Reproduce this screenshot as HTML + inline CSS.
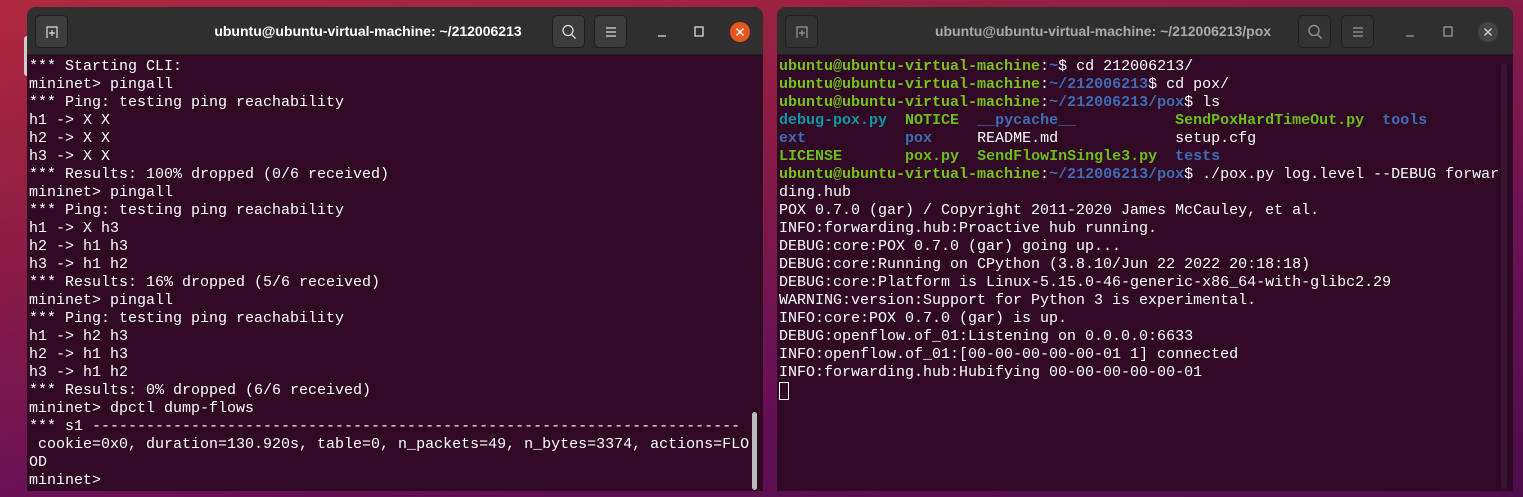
<!DOCTYPE html>
<html><head><meta charset="utf-8"><style>
*{margin:0;padding:0;box-sizing:border-box}
body{width:1523px;height:497px;overflow:hidden;position:relative;
background:linear-gradient(170deg,#b0283f 0%,#8a1c45 35%,#6a1255 65%,#4c0d4a 100%);
font-family:"Liberation Mono",monospace}
.win{position:absolute;top:7px;height:484px;background:#300a24;border-radius:9px 9px 0 0;overflow:hidden}
.tb{height:48px;background:#2f2f2f;position:relative;border-bottom:1px solid #222}
.btn{position:absolute;top:8px;width:33px;height:33px;border-radius:5px;background:#3c3c3c;border:1px solid #1f1f1f}
.title{position:absolute;top:0;height:48px;line-height:48px;font-family:"Liberation Sans",sans-serif;font-weight:bold;font-size:14px;text-align:center;white-space:nowrap}
.term{position:absolute;top:51px;left:1px;font-size:15px;line-height:18px;color:#fff;white-space:pre}
.g{color:#76c31b;font-weight:bold}.b{color:#3f6cb7;font-weight:bold}.c{color:#0c9aa6;font-weight:bold}.gg{color:#6cbf1b;font-weight:bold}
svg{position:absolute}
</style></head><body>
<div style="position:absolute;left:24px;top:36px;width:6px;height:40px;background:#ccc;border-radius:3px"></div>
<div class="win" style="left:27px;width:736px">
 <div class="tb">
  <div class="btn" style="left:8px"></div>
  <svg style="left:16px;top:16px" width="18" height="18" viewBox="0 0 18 18"><path d="M4 15V4h10v11M9 7v6M6 10h6" stroke="#ddd" stroke-width="1.2" fill="none"/></svg>
  <div class="title" style="left:141px;width:400px;color:#fff">ubuntu@ubuntu-virtual-machine: ~/212006213</div>
  <div class="btn" style="left:525px"></div>
  <svg style="left:533px;top:16px" width="18" height="18" viewBox="0 0 18 18"><circle cx="8" cy="7.5" r="5" stroke="#ddd" stroke-width="1.3" fill="none"/><path d="M11.5 11.5l4 4" stroke="#ddd" stroke-width="1.3"/></svg>
  <div class="btn" style="left:567px"></div>
  <svg style="left:575px;top:16px" width="18" height="18" viewBox="0 0 18 18"><path d="M4 5h10M4 9h10M4 13h10" stroke="#ddd" stroke-width="1.2"/></svg>
  <svg style="left:626px;top:16px" width="18" height="18" viewBox="0 0 18 18"><path d="M5 13h8" stroke="#ddd" stroke-width="1.3"/></svg>
  <svg style="left:663px;top:16px" width="18" height="18" viewBox="0 0 18 18"><rect x="5" y="4" width="8" height="9" stroke="#ddd" stroke-width="1.3" fill="none"/></svg>
  <svg style="left:702px;top:14px" width="22" height="22" viewBox="0 0 22 22"><circle cx="11" cy="11" r="10" fill="#e95420"/><path d="M7.5 7.5l7 7M14.5 7.5l-7 7" stroke="#fff" stroke-width="1.4"/></svg>
 </div>
 <div class="term" style="left:2px">*** Starting CLI:
mininet&gt; pingall
*** Ping: testing ping reachability
h1 -&gt; X X
h2 -&gt; X X
h3 -&gt; X X
*** Results: 100% dropped (0/6 received)
mininet&gt; pingall
*** Ping: testing ping reachability
h1 -&gt; X h3
h2 -&gt; h1 h3
h3 -&gt; h1 h2
*** Results: 16% dropped (5/6 received)
mininet&gt; pingall
*** Ping: testing ping reachability
h1 -&gt; h2 h3
h2 -&gt; h1 h3
h3 -&gt; h1 h2
*** Results: 0% dropped (6/6 received)
mininet&gt; dpctl dump-flows
*** s1 ------------------------------------------------------------------------
 cookie=0x0, duration=130.920s, table=0, n_packets=49, n_bytes=3374, actions=FLO
OD
mininet&gt;</div>
 <div style="position:absolute;left:725px;top:405px;width:5px;height:78px;background:#bbb;border-radius:3px"></div>
</div>
<div class="win" style="left:777px;width:736px">
 <div class="tb">
  <div class="btn" style="left:8px;background:#333"></div>
  <svg style="left:16px;top:16px" width="18" height="18" viewBox="0 0 18 18"><path d="M4 15V4h10v11M9 7v6M6 10h6" stroke="#999" stroke-width="1.2" fill="none"/></svg>
  <div class="title" style="left:106px;width:440px;color:#aaa">ubuntu@ubuntu-virtual-machine: ~/212006213/pox</div>
  <div class="btn" style="left:521px;background:#333"></div>
  <svg style="left:529px;top:16px" width="18" height="18" viewBox="0 0 18 18"><circle cx="8" cy="7.5" r="5" stroke="#999" stroke-width="1.3" fill="none"/><path d="M11.5 11.5l4 4" stroke="#999" stroke-width="1.3"/></svg>
  <div class="btn" style="left:564px;background:#333"></div>
  <svg style="left:572px;top:16px" width="18" height="18" viewBox="0 0 18 18"><path d="M4 5h10M4 9h10M4 13h10" stroke="#999" stroke-width="1.2"/></svg>
  <svg style="left:624px;top:16px" width="18" height="18" viewBox="0 0 18 18"><path d="M5 13h8" stroke="#999" stroke-width="1.3"/></svg>
  <svg style="left:662px;top:16px" width="18" height="18" viewBox="0 0 18 18"><rect x="5" y="4" width="8" height="9" stroke="#999" stroke-width="1.3" fill="none"/></svg>
  <svg style="left:700px;top:14px" width="22" height="22" viewBox="0 0 22 22"><circle cx="11" cy="11" r="10" fill="#444"/><path d="M7.5 7.5l7 7M14.5 7.5l-7 7" stroke="#ccc" stroke-width="1.4"/></svg>
 </div>
 <div class="term" style="left:2px;top:51px"><span class="g">ubuntu@ubuntu-virtual-machine</span>:<span class="b">~</span>$ cd 212006213/
<span class="g">ubuntu@ubuntu-virtual-machine</span>:<span class="b">~/212006213</span>$ cd pox/
<span class="g">ubuntu@ubuntu-virtual-machine</span>:<span class="b">~/212006213/pox</span>$ ls
<span class="c">debug-pox.py</span>  <span class="gg">NOTICE</span>  <span class="b">__pycache__</span>           <span class="gg">SendPoxHardTimeOut.py</span>  <span class="b">tools</span>
<span class="b">ext</span>           <span class="b">pox</span>     README.md             setup.cfg
<span class="gg">LICENSE</span>       <span class="gg">pox.py</span>  <span class="gg">SendFlowInSingle3.py</span>  <span class="b">tests</span>
<span class="g">ubuntu@ubuntu-virtual-machine</span>:<span class="b">~/212006213/pox</span>$ ./pox.py log.level --DEBUG forwar
ding.hub
POX 0.7.0 (gar) / Copyright 2011-2020 James McCauley, et al.
INFO:forwarding.hub:Proactive hub running.
DEBUG:core:POX 0.7.0 (gar) going up...
DEBUG:core:Running on CPython (3.8.10/Jun 22 2022 20:18:18)
DEBUG:core:Platform is Linux-5.15.0-46-generic-x86_64-with-glibc2.29
WARNING:version:Support for Python 3 is experimental.
INFO:core:POX 0.7.0 (gar) is up.
DEBUG:openflow.of_01:Listening on 0.0.0.0:6633
INFO:openflow.of_01:[00-00-00-00-00-01 1] connected
INFO:forwarding.hub:Hubifying 00-00-00-00-00-01
<span style="display:inline-block;width:10px;height:18px;border:1px solid #fff;vertical-align:top"></span></div>
 <div style="position:absolute;left:724px;top:56px;width:6px;height:426px;background:#3a1530;border-radius:3px"></div>
</div>
</body></html>
